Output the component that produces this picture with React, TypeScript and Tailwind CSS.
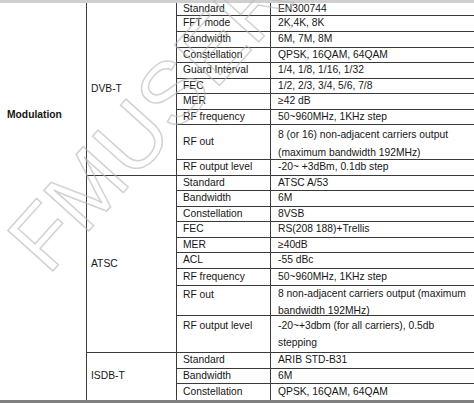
import React from "react";

type Row = { label: string; value: React.ReactNode; h: number; center?: boolean; pt?: string };

const dvbt: Row[] = [
  { label: "Standard", value: "EN300744", h: 13 },
  { label: "FFT mode", value: "2K,4K, 8K", h: 16 },
  { label: "Bandwidth", value: "6M, 7M, 8M", h: 16 },
  { label: "Constellation", value: "QPSK, 16QAM, 64QAM", h: 15 },
  { label: "Guard Interval", value: "1/4, 1/8, 1/16, 1/32", h: 16 },
  { label: "FEC", value: "1/2, 2/3, 3/4, 5/6, 7/8", h: 15 },
  { label: "MER", value: "≥42 dB", h: 16 },
  { label: "RF frequency", value: "50~960MHz, 1KHz step", h: 15 },
  {
    label: "RF out",
    value: (
      <>
        8 (or 16) non-adjacent carriers output
        <br />
        (maximum bandwidth 192MHz)
      </>
    ),
    h: 35,
    center: true,
  },
  { label: "RF output level", value: "-20~ +3dBm, 0.1db step", h: 16 },
];

const atsc: Row[] = [
  { label: "Standard", value: "ATSC A/53", h: 15 },
  { label: "Bandwidth", value: "6M", h: 16 },
  { label: "Constellation", value: "8VSB", h: 15 },
  { label: "FEC", value: "RS(208 188)+Trellis", h: 16 },
  { label: "MER", value: "≥40dB", h: 15 },
  { label: "ACL", value: "-55 dBc", h: 16 },
  { label: "RF frequency", value: "50~960MHz, 1KHz step", h: 17 },
  {
    label: "RF out",
    value: (
      <>
        8 non-adjacent carriers output (maximum
        <br />
        bandwidth 192MHz)
      </>
    ),
    h: 30,
  },
  {
    label: "RF output level",
    value: (
      <>
        -20~+3dbm (for all carriers), 0.5db
        <br />
        stepping
      </>
    ),
    h: 37,
    pt: "pt-[2px]",
  },
];

const isdb: Row[] = [
  { label: "Standard", value: "ARIB STD-B31", h: 16 },
  { label: "Bandwidth", value: "6M", h: 15 },
  { label: "Constellation", value: "QPSK, 16QAM, 64QAM", h: 16 },
];

function Group({ name, rows, last }: { name: string; rows: Row[]; last?: boolean }) {
  return (
    <div className={"flex " + (last ? "" : "border-b border-[#3a3a3a]")}>
      <div className="w-[90px] shrink-0 border-r border-[#3a3a3a] flex items-center pl-[4px]">{name}</div>
      <div className="flex-1 flex flex-col">
        {rows.map((r, i) => {
          const isLast = i === rows.length - 1;
          const multi = typeof r.value !== "string";
          return (
            <div
              key={i}
              style={{ height: isLast && !last ? r.h - 1 : r.h }}
              className={"flex " + (isLast ? "" : "border-b border-[#3a3a3a]")}
            >
              <div
                className={
                  "w-[94px] shrink-0 border-r border-[#3a3a3a] pl-[6px] flex " +
                  (multi && !r.center ? "items-start " + (r.pt ?? "pt-[1px]") : "items-center")
                }
              >
                <span className={multi && !r.center ? "leading-[16px]" : ""}>{r.label}</span>
              </div>
              <div
                className={
                  "flex-1 pl-[7px] flex whitespace-nowrap " +
                  (multi
                    ? "items-start " + (r.center ? "pt-[1px] leading-[17.5px]" : (r.pt ?? "pt-0") + " leading-[16.5px]")
                    : "items-center")
                }
              >
                <span>{r.value}</span>
              </div>
            </div>
          );
        })}
      </div>
    </div>
  );
}

export default function App() {
  return (
    <div
      className="relative w-[474px] h-[403px] overflow-hidden bg-white text-[#161616] text-[10.3px] leading-none"
      style={{ fontFamily: '"Liberation Sans", Arial, sans-serif' }}
    >
      <div className="h-[3px] bg-[#cfcfcf]" />
      <div className="flex h-[397px]">
        <div className="w-[86px] shrink-0 pt-[107px] pl-[7px] font-bold">Modulation</div>
        <div className="flex-1 flex flex-col border-l border-[#3a3a3a]">
          <Group name="DVB-T" rows={dvbt} />
          <Group name="ATSC" rows={atsc} />
          <Group name="ISDB-T" rows={isdb} last />
        </div>
      </div>
      <div className="h-[3px] bg-[#808080]" />
      <div
        className="pointer-events-none absolute left-[150px] top-[118px] select-none whitespace-nowrap text-[88px] leading-none text-transparent"
        style={{
          transform: "translate(-50%, -50%) rotate(-48deg)",
          fontFamily: '"Liberation Sans", Arial, sans-serif',
          WebkitTextStroke: "1.5px rgba(180,180,180,0.6)",
        }}
      >
        FMUSER
      </div>
    </div>
  );
}
